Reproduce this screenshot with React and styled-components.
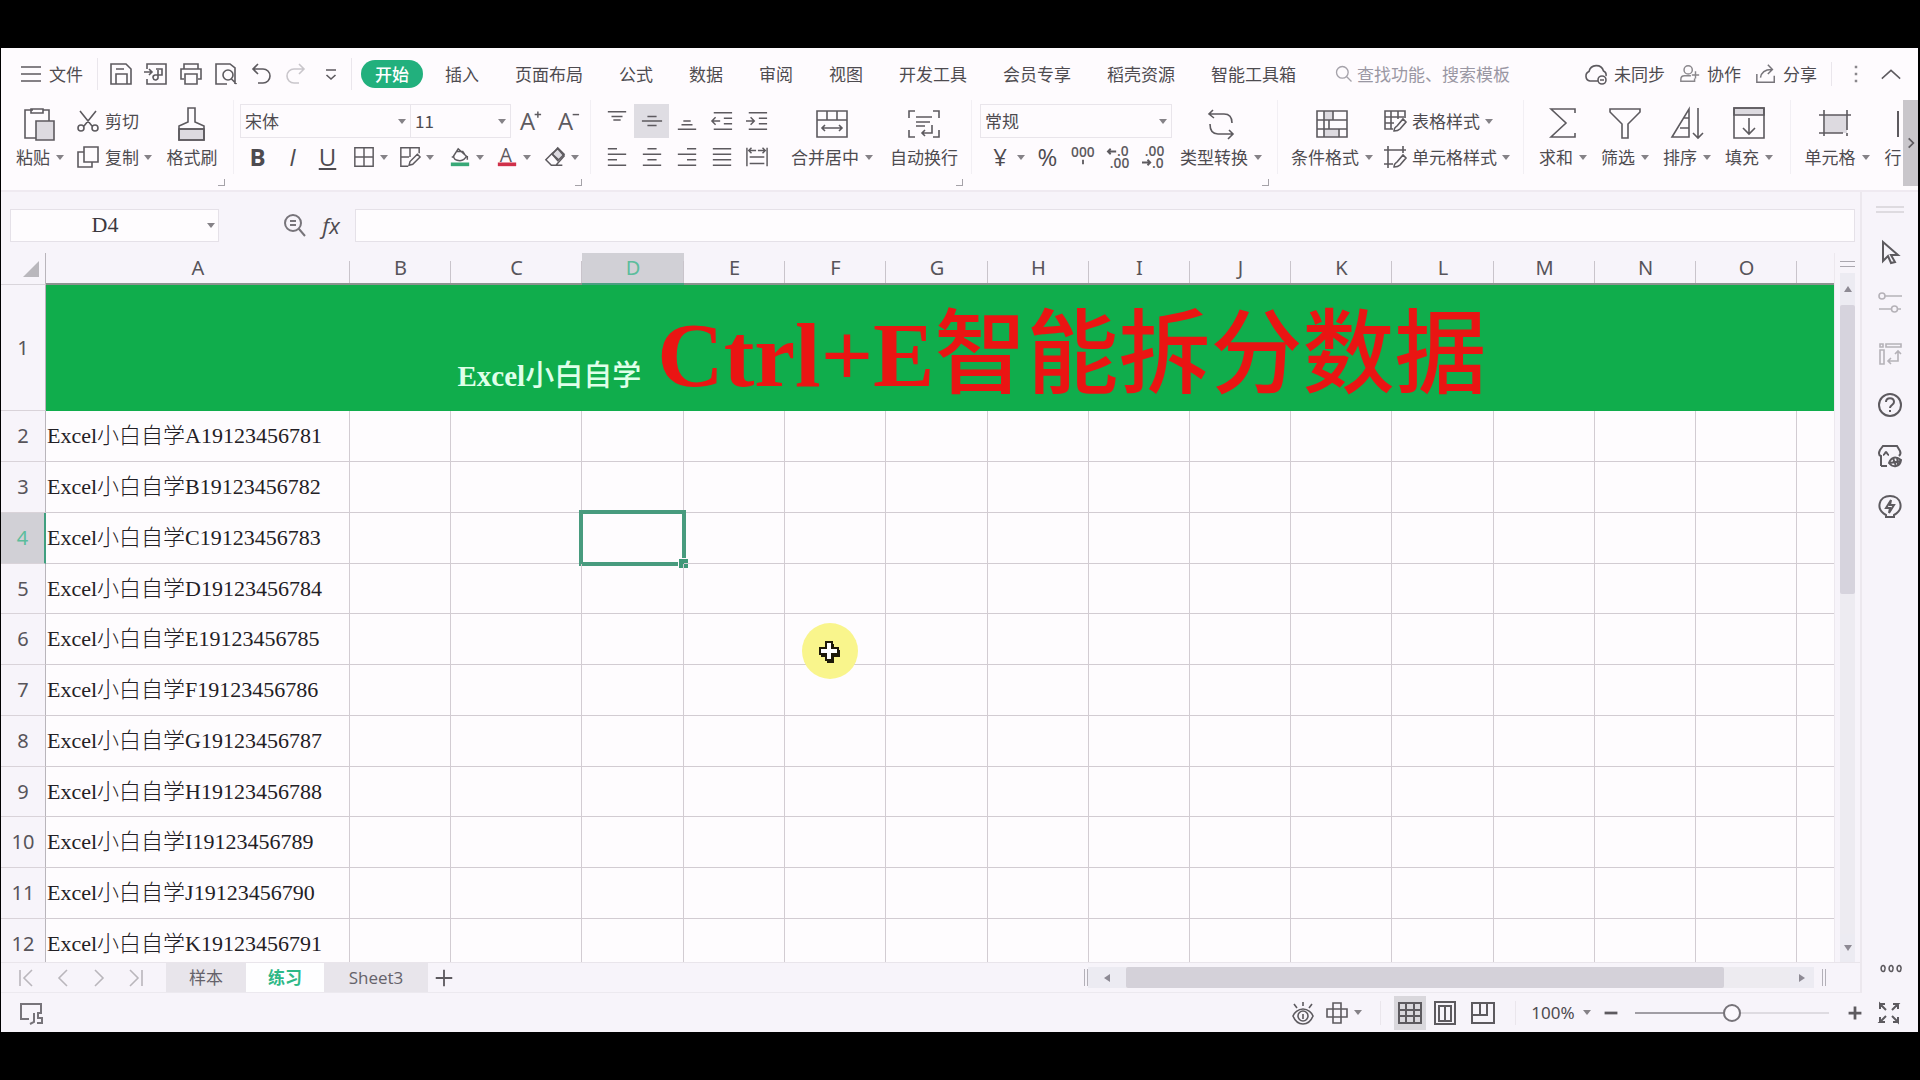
import React from 'react';
import styled, { createGlobalStyle } from 'styled-components';

const GlobalStyle = createGlobalStyle`
  * { box-sizing: border-box; }
  body {
    margin: 0;
    background: #000;
    color: #4e4b50;
    font-family: "Noto Sans CJK SC", "Open Sans", sans-serif;
    font-size: 17px;
    line-height: 20px;
  }
  button, input, select {
    font: inherit;
    color: inherit;
    border: 0;
    padding: 0;
    margin: 0;
    background: transparent;
  }
`;

const Screen = styled.div`
  height: 100vh;
  padding: 48px 2px 48px 1px;
`;

const Window = styled.main`
  height: 100%;
  display: flex;
  flex-direction: column;
  background: #f7f4fa;
  overflow: hidden;
`;

/* ---------- shared bits ---------- */

const Svg = styled.svg`
  flex: none;
  display: block;
  overflow: visible;
  fill: none;
  stroke: ${({ $color }) => $color || '#5d5a5f'};
  stroke-width: ${({ $stroke }) => $stroke || 1.6};

  text {
    stroke: none;
    fill: #5d5a5f;
    font-family: "Open Sans", sans-serif;
  }
`;

const CaretSvg = styled.svg`
  flex: none;
  display: block;
  fill: #858287;
`;

const Caret = () => (
  <CaretSvg width="8" height="5" viewBox="0 0 8 5" aria-hidden="true">
    <path d="M0 0h8L4 5z" />
  </CaretSvg>
);

const gray = '#dddae0';

const ICONS = {
  menu: <path d="M2 5h20M2 12h20M2 19h20" />,
  save: <path d="M2 2h15l5 5v15H2zM7 22v-10h11v10M7 7h8" />,
  exportPdf: <path d="M3 7V2h19v20H3v-5M0 10h8M5 7l3 3-3 3M12 7h6v6h-4v2a2.500 2.500 0 1 1-3-2h3V8" />,
  print: <path d="M5 7V2h14v5M5 17H2V7h20v10h-3M6 12h12v10H6z" />,
  preview: <path d="M13 22H2V2h14l5 4v16M14 8a5 5 0 1 1 0 10 5 5 0 0 1 0-10zM17.500 17l5 5" />,
  undo: <path d="M9 2 4 7l5 5M4 7h10a7 7 0 0 1 0 14H9" />,
  redo: <path d="M15 2l5 5-5 5M20 7H10a7 7 0 0 0 0 14h5" />,
  quick: <path d="M7 8h10M7.500 13l4.500 4 4.500-4" />,
  search: <path d="M10 3a7 7 0 1 1 0 14 7 7 0 0 1 0-14zM15 15l6 6" />,
  cloud: <path d="M14 19H6a5 5 0 0 1-1-9.500A7.500 7.500 0 0 1 19.500 9a4.500 4.500 0 0 1 2.500 5M18 14a4 4 0 1 1 0 8 4 4 0 0 1 0-8zM16 18h4" />,
  collab: <path d="M10 3a4.500 4.500 0 1 1 0 9 4.500 4.500 0 0 1 0-9zM14 20H2v-2c0-3 2-4 4-4h7M18 9v8M14 13h8M14 20h3v-3" />,
  share: <path d="M2 12v9h19v-7M6 16c1-7 6-9 12-9M14 2l5 5-5 5" />,
  more: <path d="M12 2v3M12 10.500v3M12 19v3" strokeWidth="3" />,
  up: <path d="M2 17l10-9 10 9" />,
  cut: <path d="M4 2l12 15M20 2 8 17M5 16a3 3 0 1 1 0 6 3 3 0 0 1 0-6zM19 16a3 3 0 1 1 0 6 3 3 0 0 1 0-6z" />,
  copy: <path d="M8 2h14v15H8zM8 7H2v15h14v-5" />,
  border: <path d="M2 2h20v20H2zM12 2v20M2 12h20" />,
  cellStyle: <path d="M22 8V2H2v20h8M2 12h9M12 2v10M11 21l1-4 8-8 3 3-8 8z" />,
  fill: (
    <g>
      <path d="M10 3l9 8c-2 5-5 5-7 5-5 0-7-2-7-5zM8 6h7l2 3M3 12h3M20 11v4" />
      <path d="M2 20h20" stroke="#38a877" strokeWidth="4" />
    </g>
  ),
  eraser: (
    <g>
      <path d="M9 9l6-7 7 7-7 7z" fill={gray} />
      <path d="M9 8l-7 7 6 6h5l9-10-7-8zM8 8l8 7M12 21h8" />
    </g>
  ),
  fontColor: (
    <g>
      <text x="4" y="17" fontSize="21">A</text>
      <path d="M2 20h20" stroke="#d0304a" strokeWidth="4" />
    </g>
  ),
  fontUp: (
    <g>
      <text x="0" y="22" fontSize="26">A</text>
      <path d="M16 5h7M19.500 1.500v7" />
    </g>
  ),
  fontDown: (
    <g>
      <text x="0" y="22" fontSize="26">A</text>
      <path d="M16 5h7" />
    </g>
  ),
  alignTop: <path d="M2 2h20M6 7h12M8 11h8" />,
  alignMiddle: <path d="M7 7h10M1 12h22M7 17h10" />,
  alignBottom: <path d="M8 12h8M6 16h12M2 21h20" />,
  outdent: <path d="M3 3h20M14 9h9M14 15h9M3 21h20M1 12h9M5 8l-4 4 4 4" />,
  indent: <path d="M3 3h20M14 9h9M14 15h9M3 21h20M0 12h9M5 8l4 4-4 4" />,
  left: <path d="M2 3h10M2 9h20M2 15h10M2 21h20" />,
  center: <path d="M7 3h10M2 9h20M7 15h10M2 21h20" />,
  right: <path d="M12 3h10M2 9h20M12 15h10M2 21h20" />,
  justify: <path d="M2 3h20M2 9h20M2 15h20M2 21h20" />,
  distribute: <path d="M1 2v20M23 2v20M4 5h7M13 5h7M6 2 3 5l3 3M18 2l3 3-3 3M4 12h16M4 19h16" />,
  tableStyle: <path d="M22 9V2H2v18h8M2 8h19M2 14h9M8 2v18M15 2v8M11 22c0-4 2-4 3-5l6-7 3 3-6 7c-1 1-3 2-6 2z" />,
  unitStyle: <path d="M5 1v22M1 5h22M1 19h9M20 1v7M11 22c0-4 2-4 3-5l6-7 3 3-6 7c-1 1-3 2-6 2z" />,
  thousands: (
    <g>
      <text x="-1" y="12" fontSize="15" fontWeight="600">000</text>
      <path d="M12 15v5" strokeWidth="2" />
    </g>
  ),
  decUp: (
    <g>
      <text x="11" y="11" fontSize="15" fontWeight="600">.0</text>
      <text x="3" y="24" fontSize="15" fontWeight="600">.00</text>
      <path d="M1 6h9M4 3 1 6l3 3" strokeWidth="2" />
    </g>
  ),
  decDown: (
    <g>
      <text x="3" y="11" fontSize="15" fontWeight="600">.00</text>
      <text x="11" y="24" fontSize="15" fontWeight="600">.0</text>
      <path d="M0 18h9M6 15l3 3-3 3" strokeWidth="2" />
    </g>
  ),
  zoomOut: <path d="M10 2a8 8 0 1 1 0 16 8 8 0 0 1 0-16zM16 16l6 7M7 8h6M7 12h6" />,
  first: <path d="M5 4v16M17 4l-8 8 8 8" />,
  prev: <path d="M16 4l-8 8 8 8" />,
  next: <path d="M8 4l8 8-8 8" />,
  last: <path d="M19 4v16M7 4l8 8-8 8" />,
  add: <path d="M12 3v18M3 12h18" />,
  pointer: <path d="M5 2l15 13h-7l4 7-4 1-3-7-5 5z" strokeWidth="2" />,
  sliders: <path d="M7 5h17M1 18h13M19 18h4M4 2a3 3 0 1 1 0 6 3 3 0 0 1 0-6zM16.500 15a3 3 0 1 1 0 6 3 3 0 0 1 0-6z" />,
  pivot: <path d="M2 2h3v3H2zM8 2h15v3H8zM2 8h4v14H2zM11 19h9v-9M13 16l-3 3 3 3M17 12l3-3 3 3" />,
  help: <path d="M12 1a11 11 0 1 1 0 22 11 11 0 0 1 0-22zM8 9c0-5 8-5 8 0 0 3-4 3-4 6M12 17v2" strokeWidth="2" />,
  skin: (
    <g strokeWidth="2">
      <path d="M3 22V12C0 11 1 8 2 6l3-4h14l3 5c1 2 0 4-1 5M3 22h6M5 11c2 0 2-3 3-3s1 3 3 3" />
      <path d="M11 19c2-6 7-7 12-3-1 7-8 8-12 3zM12 19l11-2M15 14l3 8M19 13l1 8" />
    </g>
  ),
  idea: <path d="M8 22v-2C-3 14 1 1 12 1s15 13 4 19v2zM13 5l-5 8h4l-1 5 5-8h-4z" strokeWidth="2" />,
  dots: <path d="M4 10a2 3 0 1 1 0 5 2 3 0 0 1 0-5zM12 10a2 3 0 1 1 0 5 2 3 0 0 1 0-5zM20 10a2 3 0 1 1 0 5 2 3 0 0 1 0-5z" />,
  macro: (
    <g strokeWidth="2">
      <path d="M10 18H2V3h20v8" />
      <path d="M15 12v9l-4 2M23 12h-4v5h4v5h-5" />
    </g>
  ),
  eye: <path d="M12 8c5 0 9 4 10 7-2 5-6 8-10 8s-8-3-10-8c1-3 5-7 10-7zM12 10a5 5 0 1 1 0 10 5 5 0 0 1 0-10zM12 13v5M12 1v4M3 3l3 4M21 3l-3 4" />,
  cross: <path d="M8 2h8v20H8zM2 8h20v8H2z" />,
  normal: <path d="M1 2h22v20H1zM1 9h22M1 15h22M8 2v20M16 2v20" strokeWidth="2" />,
  pageView: <path d="M2 1h20v22H2zM6 5h12v15H6zM12 5v15" strokeWidth="2" />,
  breakView: <path d="M1 2h22v20H1zM9 2v12h7V2M1 14h8" strokeWidth="2" />,
  minus: <path d="M5 12h14" strokeWidth="3" />,
  plus: <path d="M5 12h14M12 5v14" strokeWidth="3" />,
  full: <path d="M9 9 3 3v5M3 3h5M15 9l6-6h-5M21 3v5M9 15l-6 6h5M3 21v-5M15 15l6 6v-5M21 21h-5" strokeWidth="2" />,
};

const Icon = ({ name, size = 24, ...rest }) => (
  <Svg width={size} height={size} viewBox="0 0 24 24" aria-hidden="true" {...rest}>
    {ICONS[name]}
  </Svg>
);

const BIG_ICONS = {
  paste: (
    <g>
      <path d="M10 3H2v28h12M20 3h6v11M8 2h12v4H8z" />
      <path d="M13 14h18v19H13z" fill={gray} />
    </g>
  ),
  brush: (
    <g>
      <path d="M4 22h25v11H4z" fill={gray} />
      <path d="M13 1h7v14l9 4v14H4V19l9-4zM4 22h25" />
    </g>
  ),
  merge: <path d="M2 4h30v26H2zM2 13h30M12 4v9M22 4v9M7 21h20M10 18l-3 3 3 3M24 18l3 3-3 3" />,
  wrap: <path d="M8 4H2v7M26 4h6v7M2 23v7h6M26 30h6v-7M9 10h16M9 15h14M9 19h9M25 18v8H15M18 23l-3 3 3 3" />,
  convert: <path d="M9 3 5 7l5 4M5 7h15c6 0 8 3 8 9M6 17c0 7 3 10 8 10h15M25 23l4 4-5 5" />,
  condition: (
    <g>
      <path d="M9 4h9v9H9zM9 22h14v8H9z" fill={gray} stroke="none" />
      <path d="M2 4h30v26H2zM2 13h30M2 22h30M9 4v26M18 4v9M14 13v9M24 22v8" />
    </g>
  ),
  sum: <path d="M29 6V2H5l15 14L5 30h24v-4" />,
  filter: <path d="M2 2h30v3L20 17v14h-6V17L2 5z" />,
  sort: <path d="M19 2v28H2zM10 21h9M14 11h5M28 1v30M23 26l5 5 5-5" />,
  fillDown: (
    <g>
      <path d="M2 1h30v7H2z" fill={gray} />
      <path d="M2 1h30v30H2zM17 11v16M11 21l6 6 6-6" />
    </g>
  ),
  cells: (
    <g>
      <path d="M5 8h22v18H5z" fill={gray} stroke="none" />
      <path d="M4 3v26M27 3v20M-1 8h32M-1 26h24M27 26v3" />
    </g>
  ),
  rows: <path d="M22 4v26" strokeWidth="2" />,
};

/* ---------- menu row ---------- */

const MenuRow = styled.nav`
  height: 52px;
  flex: none;
  display: flex;
  align-items: center;
  background: #fefbfe;
  padding: 0 16px 0 18px;
  white-space: nowrap;
`;

const Divider = styled.span`
  flex: none;
  width: 1px;
  height: ${({ $h }) => $h || 32}px;
  background: #eae6ec;
`;

const FlatButton = styled.button`
  display: flex;
  align-items: center;
  gap: 6px;
  flex: none;
`;

const FileButton = styled(FlatButton)`
  margin-right: 14px;
`;

const QuickTools = styled.div`
  display: flex;
  gap: 11px;
  padding: 0 8px 0 11px;
`;

const MenuTabs = styled.div`
  display: flex;
  align-items: center;
  padding-left: 9px;
`;

const MenuTab = styled.button`
  height: 28px;
  flex: none;
  padding: 0 18px;
`;

const ActiveTab = styled(MenuTab)`
  padding: 0 14px;
  margin-right: 4px;
  border-radius: 14px;
  background: #22b07d;
  color: #fff;
  font-weight: 500;
`;

const SearchLabel = styled.label`
  display: flex;
  align-items: center;
  gap: 3px;
  margin-left: 20px;
`;

const SearchInput = styled.input`
  width: 160px;

  &::placeholder {
    color: #9a97a3;
    opacity: 1;
  }
`;

const MenuRight = styled.div`
  display: flex;
  align-items: center;
  gap: 14px;
  margin-left: auto;
`;

/* ---------- ribbon ---------- */

const RibbonBar = styled.section`
  height: 92px;
  flex: none;
  display: flex;
  background: #fefbfe;
  border-bottom: 2px solid #efeaf1;
`;

const Groups = styled.div`
  flex: 1;
  min-width: 0;
  display: flex;
  overflow: hidden;
  white-space: nowrap;
`;

const Group = styled.div`
  flex: none;
  display: flex;
  position: relative;
  width: ${({ $w }) => $w}px;
  padding-left: ${({ $pad }) => $pad || 8}px;
  height: 74px;
  padding-top: 3px;
  border-right: 1px solid #f2eff4;
`;

const Launcher = styled.i`
  position: absolute;
  right: 8px;
  bottom: -12px;
  width: 7px;
  height: 7px;
  border: solid #a5a2a8;
  border-width: 0 1px 1px 0;
`;

const BigButton = styled.button`
  width: ${({ $w }) => $w}px;
  flex: none;
  height: 72px;
  display: flex;
  flex-direction: column;
  align-items: center;
  gap: 6px;
  padding-top: 4px;
`;

const BigLabel = styled.span`
  display: flex;
  align-items: center;
  gap: 6px;
`;

const Stack = styled.div`
  width: ${({ $w }) => $w}px;
  flex: none;
`;

const Line = styled.div`
  display: flex;
  align-items: center;
  height: 36px;
`;

const SmallButton = styled(FlatButton)`
  height: 36px;
  padding-left: 4px;
  gap: 5px;
`;

const ToolButton = styled.button`
  flex: none;
  width: ${({ $w }) => $w || 35}px;
  height: 34px;
  display: flex;
  align-items: center;
  justify-content: ${({ $w }) => ($w > 40 ? 'flex-start' : 'center')};
  gap: 5px;
  background: ${({ $on }) => ($on ? '#dfdde3' : 'transparent')};
`;

const ToolGap = styled.span`
  width: 8px;
  flex: none;
`;

const Letter = styled.span`
  width: 24px;
  text-align: center;
  font-family: "Open Sans", sans-serif;
  font-size: 24px;
  line-height: 34px;
  font-weight: ${({ $bold }) => ($bold ? 700 : 400)};
  font-style: ${({ $italic }) => ($italic ? 'italic' : 'normal')};
  text-decoration: ${({ $under }) => ($under ? 'underline' : 'none')};
`;

const SelectBox = styled.span`
  display: flex;
  align-items: center;
  width: ${({ $w }) => $w}px;
  height: 34px;
  padding-right: 4px;
  border: 1px solid #e9e5eb;
  margin-left: ${({ $join }) => ($join ? -1 : 0)}px;

  select {
    flex: 1;
    min-width: 0;
    height: 32px;
    padding-left: 4px;
    appearance: none;
  }
`;

const ScrollRight = styled.button`
  width: 15px;
  height: 86px;
  flex: none;
  display: flex;
  align-items: center;
  justify-content: center;
  background: #c9c6cb;
`;

/* ---------- formula bar ---------- */

const Work = styled.div`
  flex: 1;
  min-height: 0;
  display: flex;
`;

const Editor = styled.div`
  flex: 1;
  min-width: 0;
  display: flex;
  flex-direction: column;
`;

const FormulaBar = styled.div`
  height: 61px;
  flex: none;
  display: flex;
  align-items: center;
  padding: 5px 5px 0 9px;
`;

const NameBox = styled.span`
  width: 209px;
  height: 33px;
  display: flex;
  align-items: center;
  padding-right: 3px;
  margin-right: 64px;
  background: #fefcfe;
  border: 1px solid #e5e1e8;

  input {
    flex: 1;
    min-width: 0;
    text-align: center;
    padding-right: 8px;
    font-family: "Liberation Serif", serif;
    font-size: 22px;
    color: #3c393e;
  }
`;

const Fx = styled.button`
  width: 48px;
  font-family: "Open Sans", sans-serif;
  font-style: italic;
  font-size: 22px;
`;

const FormulaInput = styled.input`
  flex: 1;
  min-width: 0;
  height: 33px;
  background: #fefcfe;
  border: 1px solid #e5e1e8;
`;

/* ---------- grid ---------- */

const GridArea = styled.div`
  flex: 1;
  min-height: 0;
  display: flex;
`;

const Viewport = styled.div`
  flex: 1;
  min-width: 0;
  position: relative;
  overflow: hidden;
  background: #fefcfe;
`;

const Sheet = styled.table`
  table-layout: fixed;
  width: 1897px;
  border-collapse: separate;
  border-spacing: 0;
`;

const ColHead = styled.th`
  position: relative;
  height: 32px;
  padding: 0;
  font-family: "Noto Sans", sans-serif;
  font-size: 20px;
  font-weight: 400;
  color: ${({ $on }) => ($on ? '#5cbd9c' : '#57545a')};
  background: ${({ $on }) => ($on ? '#d1d0d6' : '#f7f4fa')};
  border-bottom: 2px solid ${({ $on }) => ($on ? '#4a9f81' : '#8b938f')};

  &::after {
    content: '';
    position: absolute;
    right: 0;
    top: 8px;
    bottom: 0;
    width: 1px;
    background: #c9c4cb;
  }
`;

const Corner = styled.th`
  padding: 0;
  background: #f7f4fa;
  border-bottom: 1px solid #d9d5db;
  border-right: 1px solid #b9b5bb;

  svg {
    display: block;
    margin-left: 22px;
    fill: #b9b7bc;
  }
`;

const RowHead = styled.th`
  padding: 0;
  font-family: "Noto Sans", sans-serif;
  font-size: 20px;
  font-weight: 400;
  color: ${({ $on }) => ($on ? '#5cbd9c' : '#57545a')};
  background: ${({ $on }) => ($on ? '#d1d0d6' : '#f7f4fa')};
  border-bottom: 1px solid #d9d3d9;
  border-right: ${({ $on }) => ($on ? '2px solid #3f9f7f' : '1px solid #b9b5bb')};
`;

const Cell = styled.td`
  position: relative;
  height: ${({ $h }) => $h}px;
  padding: 0 0 0 1px;
  border: solid #d2ccd2;
  border-width: 0 1px 1px 0;
  white-space: nowrap;
  font-family: "Liberation Serif", "Noto Sans CJK SC", serif;
  font-size: 22px;
  font-weight: 300;
  line-height: 28px;
  color: #232025;
`;

const Selection = styled.span`
  position: absolute;
  inset: -3px;
  border: 4px solid #489b7e;

  &::after {
    content: '';
    position: absolute;
    right: -6px;
    bottom: -6px;
    width: 9px;
    height: 9px;
    background: #3f9878;
    border: solid #fefcfe;
    border-width: 1px 0 0 1px;
  }
`;

const Banner = styled.td`
  padding: 0;
  background: #10ad4c;
`;

const BannerText = styled.div`
  height: 126px;
  padding-top: 10px;
  text-align: center;
  white-space: nowrap;
  font-family: "Liberation Serif", "Noto Sans CJK SC", serif;
  font-weight: 500;
  line-height: 120px;

  b {
    font-weight: 700;
  }
`;

const BannerSmall = styled.span`
  margin-right: 16px;
  font-size: 29px;
  color: #dfffe9;
`;

const BannerBig = styled.span`
  font-size: 92px;
  color: #ea1513;
`;

const Pointer = styled.svg`
  position: absolute;
  left: 800px;
  top: 369px;
`;

const VScroll = styled.div`
  flex: none;
  width: 26px;
  padding: 8px 5px 0;
  border-left: 1px solid #ece8ee;
  display: flex;
  flex-direction: column;
`;

const SplitBar = styled.div`
  height: 6px;
  flex: none;
  margin-bottom: 6px;
  border: solid #aaa7af;
  border-width: 1px 0;
`;

const ScrollArrow = styled.button`
  flex: none;
  width: ${({ $w }) => $w}px;
  height: ${({ $h }) => $h}px;
  display: flex;
  align-items: center;
  justify-content: center;
  background: #ecebf2;

  svg { fill: #8d8a94; }
`;

const VTrack = styled.div`
  flex: 1;
  background: #edebf1;
`;

const VThumb = styled.div`
  height: 46%;
  background: #d6d3dd;
  border-radius: 2px;
`;

/* ---------- sheet tabs ---------- */

const SheetBar = styled.div`
  height: 31px;
  flex: none;
  display: flex;
  align-items: stretch;
  border-top: 1px solid #e9e5eb;
  border-bottom: 1px solid #ece9ef;
`;

const SheetNav = styled.div`
  width: 165px;
  display: flex;
  align-items: center;
  gap: 12px;
  padding-left: 14px;
`;

const SheetTab = styled.button`
  width: ${({ $w }) => $w}px;
  flex: none;
  background: ${({ $on }) => ($on ? '#fefeff' : '#e8e5eb')};
  color: ${({ $on }) => ($on ? '#2db887' : '#65626a')};
  font-family: "Open Sans", "Noto Sans CJK SC", sans-serif;
  font-weight: ${({ $on }) => ($on ? 700 : 400)};
`;

const AddSheet = styled.button`
  width: 32px;
  display: flex;
  align-items: center;
  justify-content: center;
`;

const HScroll = styled.div`
  width: 750px;
  margin: 4px 26px 4px auto;
  display: flex;
  align-items: stretch;
`;

const Grip = styled.span`
  flex: none;
  width: 4px;
  margin: 2px ${({ $gap }) => $gap}px;
  border: solid #b3b0b8;
  border-width: 0 1px;
`;

const HTrack = styled.div`
  flex: 1;
  background: #edebf0;
`;

const HThumb = styled.div`
  width: 90%;
  height: 100%;
  background: #d4d1d9;
  border-radius: 2px;
`;

/* ---------- side and status bars ---------- */

const SideBar = styled.aside`
  width: 58px;
  flex: none;
  display: flex;
  flex-direction: column;
  align-items: center;
  gap: 27px;
  padding: 14px 0 13px;
  border-left: 2px solid #ece8ee;
`;

const SideGrip = styled.span`
  flex: none;
  width: 28px;
  height: 7px;
  border: solid #dedbe0;
  border-width: 2px 0;
`;

const SideButton = styled.button`
  flex: none;
  height: 24px;
  margin-top: ${({ $last }) => ($last ? 'auto' : 0)};
`;

const StatusBar = styled.footer`
  height: 39px;
  flex: none;
  display: flex;
  align-items: center;
  padding: 0 11px 0 18px;
`;

const StatusTools = styled.div`
  display: flex;
  align-items: center;
  margin-left: auto;
`;

const StatusGap = styled(Divider)`
  height: 24px;
  margin: 0 13px;
`;

const StatusButton = styled.button`
  width: ${({ $w }) => $w}px;
  height: 34px;
  display: flex;
  align-items: center;
  justify-content: center;
  gap: 5px;
  background: ${({ $on }) => ($on ? '#d9d7dc' : 'transparent')};
`;

const ZoomText = styled(StatusButton)`
  font-family: "Noto Sans", sans-serif;
  font-size: 17px;
  gap: 8px;
`;

const ZoomRange = styled.input`
  width: 194px;
  height: 20px;
  margin: 0 10px 0 6px;
  appearance: none;
  background: linear-gradient(90deg, #a09da4 50%, #dedbe1 50%) center / 100% 2px no-repeat;

  &::-webkit-slider-thumb {
    appearance: none;
    width: 18px;
    height: 18px;
    border: 2px solid #767379;
    border-radius: 50%;
    background: #fbf8fd;
  }
`;

/* ---------- data ---------- */

const menuTabs = ['插入', '页面布局', '公式', '数据', '审阅', '视图', '开发工具', '会员专享', '稻壳资源', '智能工具箱'];
const quickTools = [
  ['save', '保存'], ['exportPdf', '输出为PDF'], ['print', '打印'], ['preview', '打印预览'], ['undo', '撤销'],
  ['redo', '恢复', '#c9c6cb'], ['quick', '自定义'],
];
const columns = [
  ['A', 304], ['B', 101], ['C', 131], ['D', 102], ['E', 101], ['F', 101], ['G', 102], ['H', 101], ['I', 101],
  ['J', 101], ['K', 101], ['L', 102], ['M', 101], ['N', 101], ['O', 101], ['', 101],
];
const rows = [
  'A19123456781', 'B19123456782', 'C19123456783', 'D19123456784', 'E19123456785', 'F19123456786',
  'G19123456787', 'H19123456788', 'I19123456789', 'J19123456790', 'K19123456791',
];
const sideTools = [
  ['pointer', '选择'], ['sliders', '属性', '#b5b2b8'], ['pivot', '分析', '#b5b2b8'],
  ['help', '帮助'], ['skin', '皮肤'], ['idea', '推荐'],
];

const Big = ({ icon, label, w, caret = true }) => (
  <BigButton type="button" $w={w}>
    <Svg width="34" height="34" viewBox="0 0 34 34" aria-hidden="true">{BIG_ICONS[icon]}</Svg>
    <BigLabel>{label}{caret && <Caret />}</BigLabel>
  </BigButton>
);

const Tool = ({ icon, label, w, on, caret, children }) => (
  <ToolButton type="button" aria-label={label} $w={w} $on={on}>
    {icon ? <Icon name={icon} size={22} /> : children}
    {caret && <Caret />}
  </ToolButton>
);

const Menu = () => (
  <MenuRow>
    <FileButton type="button"><Icon name="menu" />文件</FileButton>
    <Divider />
    <QuickTools>
      {quickTools.map(([icon, label, color]) => (
        <FlatButton type="button" key={icon} aria-label={label}><Icon name={icon} $color={color} /></FlatButton>
      ))}
    </QuickTools>
    <Divider />
    <MenuTabs>
      <ActiveTab type="button">开始</ActiveTab>
      {menuTabs.map((tab) => <MenuTab type="button" key={tab}>{tab}</MenuTab>)}
    </MenuTabs>
    <SearchLabel>
      <Icon name="search" size={20} $color="#a5a2aa" />
      <SearchInput aria-label="搜索" placeholder="查找功能、搜索模板" />
    </SearchLabel>
    <MenuRight>
      <FlatButton type="button"><Icon name="cloud" />未同步</FlatButton>
      <FlatButton type="button"><Icon name="collab" size={22} $color="#8a878c" />协作</FlatButton>
      <FlatButton type="button"><Icon name="share" size={22} $color="#77747a" />分享</FlatButton>
      <Divider $h={24} />
      <FlatButton type="button" aria-label="更多"><Icon name="more" size={20} $color="#8a878c" /></FlatButton>
      <FlatButton type="button" aria-label="收起功能区"><Icon name="up" size={22} /></FlatButton>
    </MenuRight>
  </MenuRow>
);

const Ribbon = () => (
  <RibbonBar>
    <Groups>
      <Group $w={233} $pad={7}>
        <Big icon="paste" label="粘贴" w={64} />
        <Stack $w={90}>
          <SmallButton type="button"><Icon name="cut" />剪切</SmallButton>
          <SmallButton type="button"><Icon name="copy" />复制<Caret /></SmallButton>
        </Stack>
        <Big icon="brush" label="格式刷" w={60} caret={false} />
        <Launcher />
      </Group>

      <Group $w={357} $pad={6}>
        <Stack $w={350}>
          <Line>
            <SelectBox $w={171}>
              <select aria-label="字体"><option>宋体</option></select>
              <Caret />
            </SelectBox>
            <SelectBox $w={101} $join>
              <select aria-label="字号"><option>11</option></select>
              <Caret />
            </SelectBox>
            <Tool icon="fontUp" label="增大字号" w={40} />
            <Tool icon="fontDown" label="减小字号" />
          </Line>
          <Line>
            <Tool label="加粗"><Letter $bold>B</Letter></Tool>
            <Tool label="倾斜"><Letter $italic>I</Letter></Tool>
            <Tool label="下划线"><Letter $under>U</Letter></Tool>
            <ToolGap />
            <Tool icon="border" label="边框" w={46} caret />
            <Tool icon="cellStyle" label="单元格样式" w={50} caret />
            <Tool icon="fill" label="填充颜色" w={47} caret />
            <Tool icon="fontColor" label="字体颜色" w={48} caret />
            <Tool icon="eraser" label="清除" w={42} caret />
          </Line>
        </Stack>
        <Launcher />
      </Group>

      <Group $w={381} $pad={8}>
        <Stack $w={188}>
          <Line>
            <Tool icon="alignTop" label="顶端对齐" />
            <Tool icon="alignMiddle" label="垂直居中" on />
            <Tool icon="alignBottom" label="底端对齐" />
            <Tool icon="outdent" label="减少缩进" />
            <Tool icon="indent" label="增加缩进" />
          </Line>
          <Line>
            <Tool icon="left" label="左对齐" />
            <Tool icon="center" label="水平居中" />
            <Tool icon="right" label="右对齐" />
            <Tool icon="justify" label="两端对齐" />
            <Tool icon="distribute" label="分散对齐" />
          </Line>
        </Stack>
        <Big icon="merge" label="合并居中" w={90} />
        <Big icon="wrap" label="自动换行" w={94} caret={false} />
        <Launcher />
      </Group>

      <Group $w={306} $pad={8}>
        <Stack $w={196}>
          <Line>
            <SelectBox $w={192}>
              <select aria-label="数字格式"><option>常规</option></select>
              <Caret />
            </SelectBox>
          </Line>
          <Line>
            <ToolGap />
            <Tool label="货币" w={42} caret><Letter>¥</Letter></Tool>
            <Tool label="百分比"><Letter>%</Letter></Tool>
            <Tool icon="thousands" label="千位分隔" />
            <Tool icon="decUp" label="增加小数位" />
            <Tool icon="decDown" label="减少小数位" />
          </Line>
        </Stack>
        <Big icon="convert" label="类型转换" w={90} />
        <Launcher />
      </Group>

      <Group $w={246} $pad={7}>
        <Big icon="condition" label="条件格式" w={94} />
        <Stack $w={140}>
          <SmallButton type="button"><Icon name="tableStyle" />表格样式<Caret /></SmallButton>
          <SmallButton type="button"><Icon name="unitStyle" />单元格样式<Caret /></SmallButton>
        </Stack>
      </Group>

      <Group $w={267} $pad={8}>
        <Big icon="sum" label="求和" w={62} />
        <Big icon="filter" label="筛选" w={62} />
        <Big icon="sort" label="排序" w={62} />
        <Big icon="fillDown" label="填充" w={62} />
      </Group>

      <Group $w={140} $pad={7}>
        <Big icon="cells" label="单元格" w={78} />
        <Big icon="rows" label="行" w={34} caret={false} />
      </Group>
    </Groups>
    <ScrollRight type="button" aria-label="更多功能"><Icon name="next" size={14} $stroke={3} /></ScrollRight>
  </RibbonBar>
);

const Grid = () => (
  <Viewport>
    <Sheet>
      <colgroup>
        <col width="45" />
        {columns.map(([name, width]) => <col key={name} width={width} />)}
      </colgroup>
      <thead>
        <tr>
          <Corner><svg width="16" height="16" aria-hidden="true"><path d="M16 0v16H0z" /></svg></Corner>
          {columns.map(([name]) => <ColHead key={name} $on={name === 'D'}>{name}</ColHead>)}
        </tr>
      </thead>
      <tbody>
        <tr>
          <RowHead>1</RowHead>
          <Banner colSpan={columns.length}>
            <BannerText>
              <BannerSmall><b>Excel</b>小白自学</BannerSmall>
              <BannerBig><b>Ctrl+E</b>智能拆分数据</BannerBig>
            </BannerText>
          </Banner>
        </tr>
        {rows.map((code, i) => (
          <tr key={code}>
            <RowHead $on={i === 2}>{i + 2}</RowHead>
            {columns.map(([name], c) => (
              <Cell key={name} $h={i % 4 === 3 ? 50 : 51}>
                {c === 0 && `Excel小白自学${code}`}
                {i === 2 && name === 'D' && <Selection />}
              </Cell>
            ))}
          </tr>
        ))}
      </tbody>
    </Sheet>
    <Pointer width="58" height="58" viewBox="0 0 58 58" aria-hidden="true">
      <circle cx="29" cy="29" r="28" fill="#f9f58c" />
      <path d="M27 22h6v6h6v7h-6v6h-7v-6h-6v-6h7z" fill="#1d1909" />
      <path d="M25 20h6v6h6v6h-6v6h-6v-6h-6v-6h6z" fill="#fff" stroke="#1d1909" strokeWidth="2" />
    </Pointer>
  </Viewport>
);

export default function App() {
  return (
    <Screen>
      <GlobalStyle />
      <Window>
        <Menu />
        <Ribbon />
        <Work>
          <Editor>
            <FormulaBar>
              <NameBox>
                <input aria-label="名称框" defaultValue="D4" />
                <Caret />
              </NameBox>
              <FlatButton type="button" aria-label="缩小"><Icon name="zoomOut" $color="#77747a" $stroke={2} /></FlatButton>
              <Fx type="button">fx</Fx>
              <FormulaInput aria-label="编辑栏" />
            </FormulaBar>
            <GridArea>
              <Grid />
              <VScroll>
                <SplitBar />
                <ScrollArrow type="button" aria-label="向上" $w={15} $h={32}>
                  <svg width="8" height="6"><path d="M4 0l4 6H0z" /></svg>
                </ScrollArrow>
                <VTrack><VThumb /></VTrack>
                <ScrollArrow type="button" aria-label="向下" $w={15} $h={28}>
                  <svg width="8" height="6"><path d="M0 0h8L4 6z" /></svg>
                </ScrollArrow>
              </VScroll>
            </GridArea>
            <SheetBar>
              <SheetNav>
                {['first', 'prev', 'next', 'last'].map((name) => (
                  <FlatButton type="button" key={name} aria-label={name}><Icon name={name} $color="#b9b6bc" /></FlatButton>
                ))}
              </SheetNav>
              <SheetTab type="button" $w={80}>样本</SheetTab>
              <SheetTab type="button" $w={78} $on>练习</SheetTab>
              <SheetTab type="button" $w={104}>Sheet3</SheetTab>
              <AddSheet type="button" aria-label="新建工作表"><Icon name="add" size={22} $stroke={2} /></AddSheet>
              <HScroll>
                <Grip $gap={0} />
                <ScrollArrow type="button" aria-label="向左" $w={38} $h={21}>
                  <svg width="6" height="8"><path d="M6 0v8L0 4z" /></svg>
                </ScrollArrow>
                <HTrack><HThumb /></HTrack>
                <ScrollArrow type="button" aria-label="向右" $w={24} $h={21}>
                  <svg width="6" height="8"><path d="M0 0l6 4-6 4z" /></svg>
                </ScrollArrow>
                <Grip $gap={8} />
              </HScroll>
            </SheetBar>
          </Editor>
          <SideBar>
            <SideGrip />
            {sideTools.map(([icon, label, color]) => (
              <SideButton type="button" key={icon} aria-label={label}><Icon name={icon} $color={color} /></SideButton>
            ))}
            <SideButton type="button" aria-label="更多" $last><Icon name="dots" /></SideButton>
          </SideBar>
        </Work>
        <StatusBar>
          <FlatButton type="button" aria-label="宏"><Icon name="macro" $color="#77747a" /></FlatButton>
          <StatusTools>
            <StatusButton type="button" aria-label="护眼模式" $w={32}><Icon name="eye" /></StatusButton>
            <StatusButton type="button" aria-label="阅读模式" $w={48}><Icon name="cross" /><Caret /></StatusButton>
            <StatusGap />
            <StatusButton type="button" aria-label="普通视图" $w={32} $on><Icon name="normal" /></StatusButton>
            <StatusButton type="button" aria-label="页面布局" $w={38}><Icon name="pageView" /></StatusButton>
            <StatusButton type="button" aria-label="分页预览" $w={38}><Icon name="breakView" /></StatusButton>
            <StatusGap />
            <ZoomText type="button" $w={64}>100%<Caret /></ZoomText>
            <StatusButton type="button" aria-label="缩小显示" $w={36}><Icon name="minus" size={22} /></StatusButton>
            <ZoomRange type="range" min="0" max="100" defaultValue="50" aria-label="缩放" />
            <StatusButton type="button" aria-label="放大显示" $w={32}><Icon name="plus" size={22} /></StatusButton>
            <StatusButton type="button" aria-label="全屏" $w={36}><Icon name="full" /></StatusButton>
          </StatusTools>
        </StatusBar>
      </Window>
    </Screen>
  );
}
